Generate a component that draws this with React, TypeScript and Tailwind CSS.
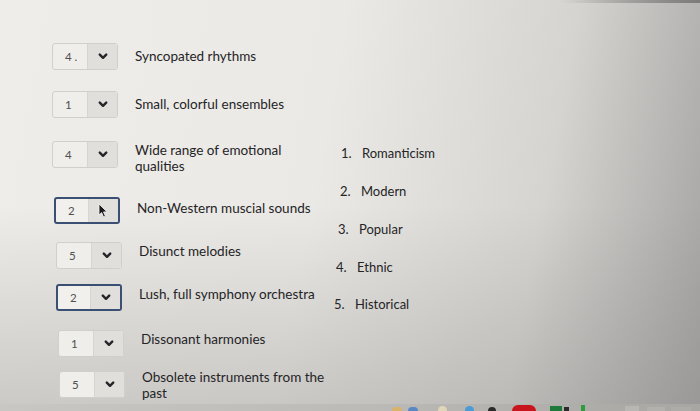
import React from 'react';

type Row = {
  value: string;
  text: string[];
  rowClass: string;
  textClass: string;
  focused?: boolean;
  cursor?: boolean;
};

const rows: Row[] = [
  { value: '4 .', text: ['Syncopated rhythms'], rowClass: 'mt-[43px] pl-[52px]', textClass: 'pt-[5px]' },
  { value: '1', text: ['Small, colorful ensembles'], rowClass: 'mt-[21px] pl-[52px]', textClass: 'pt-[5px]' },
  { value: '4', text: ['Wide range of emotional', 'qualities'], rowClass: 'mt-[23px] pl-[52px]', textClass: 'pt-[1px]' },
  { value: '2', text: ['Non-Western muscial sounds'], rowClass: 'mt-[23px] pl-[54px]', textClass: 'pt-[3px]', focused: true, cursor: true },
  { value: '5', text: ['Disunct melodies'], rowClass: 'mt-[18px] pl-[56px]', textClass: 'pt-[1px]' },
  { value: '2', text: ['Lush, full symphony orchestra'], rowClass: 'mt-[15px] pl-[56px]', textClass: 'pt-[2px]', focused: true },
  { value: '1', text: ['Dissonant harmonies'], rowClass: 'mt-[19px] pl-[58px]', textClass: 'pt-[1px]' },
  { value: '5', text: ['Obsolete instruments from the', 'past'], rowClass: 'mt-[14px] pl-[59px]', textClass: '-mt-[2px]' },
];

const choices = [
  { n: '1.', label: 'Romanticism', cls: 'ml-[341px] mt-[145px]' },
  { n: '2.', label: 'Modern', cls: 'ml-[340px] mt-[21px]' },
  { n: '3.', label: 'Popular', cls: 'ml-[338px] mt-[21px]' },
  { n: '4.', label: 'Ethnic', cls: 'ml-[336px] mt-[21px]' },
  { n: '5.', label: 'Historical', cls: 'ml-[334px] mt-[20px]' },
];

const Chevron = () => (
  <svg width="10" height="7" viewBox="0 0 10 7" fill="none">
    <path d="M1.8 1.6 L5 4.8 L8.2 1.6" stroke="#26262a" strokeWidth="2.4" strokeLinecap="round" strokeLinejoin="round" />
  </svg>
);

const Cursor = () => (
  <svg width="11" height="15" viewBox="0 0 11 15">
    <path d="M1 1 L1 12 L3.6 9.6 L5.6 14 L7.4 13.2 L5.5 8.9 L9 8.9 Z" fill="#1b1b1b" stroke="#f4f4f4" strokeWidth="0.8" />
  </svg>
);

const Select = ({ value, focused, cursor }: { value: string; focused?: boolean; cursor?: boolean }) => (
  <div
    className={
      focused
        ? 'flex h-[27px] w-[66px] shrink-0 overflow-hidden rounded-[3px] border-2 border-[#3a4f73] bg-[#f1f0ed]'
        : 'flex h-[27px] w-[66px] shrink-0 overflow-hidden rounded-[3px] border border-[#d0cfcc] bg-[#efeeeb]'
    }
  >
    <div className="flex flex-1 items-center pl-[12px] text-[11.5px] text-[#505052]">{value}</div>
    <div className="flex w-[30px] items-center justify-center border-l border-[#d6d5d2] bg-[#e0dfdc]">
      {cursor ? <Cursor /> : <Chevron />}
    </div>
  </div>
);

export default function App() {
  return (
    <div
      className="relative h-[411px] w-[700px] overflow-hidden bg-[linear-gradient(100deg,#efede9_0%,#ebe9e5_45%,#d6d4d1_75%,#a3a19f_100%)] text-[#242426]"
      style={{ fontFamily: 'Lato, "Open Sans", sans-serif' }}
    >
      <div className="pointer-events-none absolute inset-0 bg-linear-to-b from-transparent via-transparent to-[#8a8886]/35" />
      <div className="absolute right-0 top-0 h-[3px] w-[140px] bg-linear-to-r from-transparent to-[#7d7b79]" />

      <div className="relative flex">
        <div className="flex w-[330px] flex-col">
          {rows.map((r, i) => (
            <div key={i} className={`flex items-start ${r.rowClass}`}>
              <Select value={r.value} focused={r.focused} cursor={r.cursor} />
              <div className={`ml-[17px] text-[13.5px] leading-[16px] ${r.textClass}`}>
                {r.text.map((t, j) => (
                  <div key={j}>{t}</div>
                ))}
              </div>
            </div>
          ))}
        </div>
        <div className="absolute left-0 top-0 flex flex-col">
          {choices.map((c) => (
            <div key={c.n} className={`flex items-center text-[13px] leading-[17px] ${c.cls}`}>
              <span className="w-[21px]">{c.n}</span>
              <span>{c.label}</span>
            </div>
          ))}
        </div>
      </div>

      <div className="absolute bottom-0 left-0 flex h-[7px] w-[700px] items-end bg-linear-to-r from-[#c9c7c3] via-[#bdbbb7] to-[#a8a6a3]">
        <div className="ml-[392px] h-[4px] w-[10px] rounded-t-sm bg-[#d9b36a]" />
        <div className="ml-[6px] h-[4px] w-[10px] rounded-t-sm bg-[#5b86c4]" />
        <div className="ml-[20px] h-[5px] w-[9px] rounded-t-full bg-[#e0d6b8]" />
        <div className="ml-[18px] h-[5px] w-[9px] rounded-t-full bg-[#4a9ad6]" />
        <div className="ml-[14px] h-[4px] w-[8px] rounded-t-sm bg-[#2a2a2a]" />
        <div className="ml-[16px] h-[6px] w-[24px] rounded-t-md bg-[#c8141c]" />
        <div className="ml-[14px] h-[5px] w-[12px] bg-[#1d7a3a]" />
        <div className="ml-[2px] h-[4px] w-[5px] bg-[#2a2a2a]" />
        <div className="ml-[12px] h-[6px] w-[4px] bg-[#2e9b3c]" />
        <div className="ml-[40px] h-[5px] w-[14px] bg-[#b9b7b4]" />
        <div className="ml-[8px] h-[4px] w-[18px] bg-[#b3b1ae]" />
        <div className="ml-[6px] h-[4px] w-[20px] bg-[#aeaca9]" />
      </div>
    </div>
  );
}
